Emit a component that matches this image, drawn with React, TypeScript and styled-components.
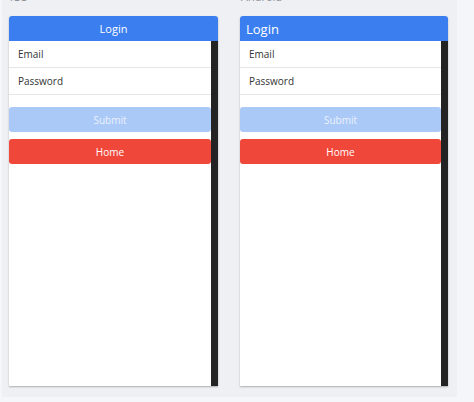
import styled, { createGlobalStyle } from "styled-components";

const GlobalStyle = createGlobalStyle`
  html, body {
    margin: 0;
    padding: 0;
    background: #f5f6f9;
    font-family: "Open Sans", "Noto Sans", sans-serif;
  }
`;

const Page = styled.div`
  width: 455px;
  height: 397px;
  margin-left: 2px;
  background: #eef0f4;
  overflow: hidden;
  display: grid;
  grid-template-columns: 209px 208px;
  column-gap: 22px;
  padding-left: 7px;
  box-sizing: border-box;
`;

const Column = styled.div`
  display: flex;
  flex-direction: column;
`;

const Caption = styled.div`
  height: 12px;
  margin-top: -9px;
  margin-left: 1px;
  margin-bottom: 13px;
  font-size: 11px;
  line-height: 12px;
  color: #8a8d94;
`;

const Phone = styled.div`
  height: 370px;
  display: flex;
  flex-direction: column;
  background: #fff;
  border-radius: 3px 3px 0 0;
  box-shadow: 0 1px 2px rgba(0, 0, 0, 0.28);
`;

interface HeaderProps {
  align: "center" | "left";
}

const Header = styled.div<HeaderProps>`
  height: 25px;
  flex: none;
  background: #3b7eef;
  border-radius: 3px 3px 0 0;
  color: #fff;
  display: flex;
  align-items: center;
  justify-content: ${(p) => (p.align === "center" ? "center" : "flex-start")};
  padding: 0 6px;
  font-size: ${(p) => (p.align === "center" ? "11px" : "13px")};
`;

const Body = styled.div`
  flex: 1;
  display: flex;
`;

const Content = styled.div`
  flex: 1;
  display: flex;
  flex-direction: column;
`;

const ScrollBar = styled.div`
  width: 7px;
  background: #232323;
`;

interface FieldProps {
  tall?: boolean;
}

const Field = styled.div<FieldProps>`
  height: ${(p) => (p.tall ? 26 : 26)}px;
  border-bottom: 1px solid #e6e6e6;
  display: flex;
  align-items: center;
  padding-left: 9px;
  font-size: 10px;
  color: #333;
`;

interface ButtonProps {
  variant: "submit" | "home";
}

const Button = styled.div<ButtonProps>`
  height: 25px;
  margin-top: ${(p) => (p.variant === "submit" ? "12px" : "7px")};
  border-radius: 3px;
  background: ${(p) => (p.variant === "submit" ? "#abc9f7" : "#f0473b")};
  color: ${(p) => (p.variant === "submit" ? "#eaf1fd" : "#fff")};
  display: flex;
  align-items: center;
  justify-content: center;
  font-size: 10px;
`;

function LoginScreen({ caption, align }: { caption: string; align: "center" | "left" }) {
  return (
    <Column>
      <Caption>{caption}</Caption>
      <Phone>
        <Header align={align}>Login</Header>
        <Body>
          <Content>
            <Field>Email</Field>
            <Field>Password</Field>
            <Button variant="submit">Submit</Button>
            <Button variant="home">Home</Button>
          </Content>
          <ScrollBar />
        </Body>
      </Phone>
    </Column>
  );
}

export default function App() {
  return (
    <>
      <GlobalStyle />
      <Page>
        <LoginScreen caption="iOS" align="center" />
        <LoginScreen caption="Android" align="left" />
      </Page>
    </>
  );
}
